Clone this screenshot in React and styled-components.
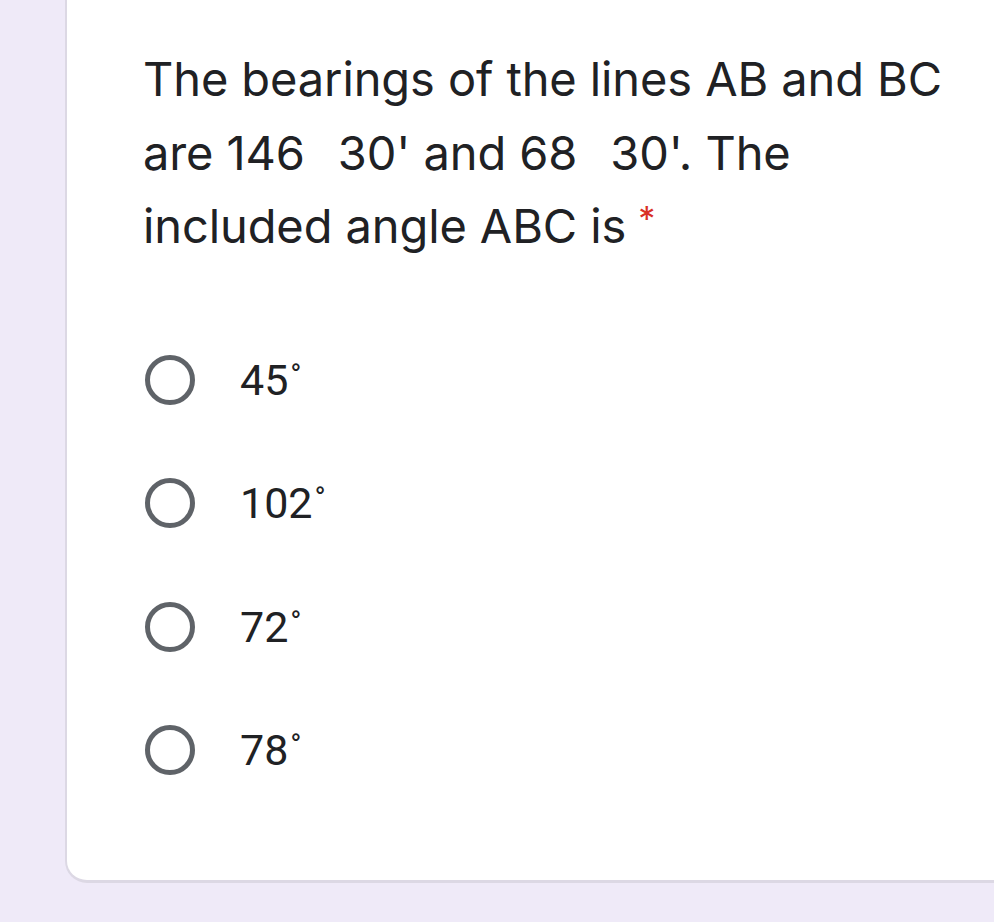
import styled, { createGlobalStyle } from "styled-components";

const GlobalStyle = createGlobalStyle`
  html, body {
    margin: 0;
    padding: 0;
    background: #efeaf8;
  }
  body {
    overflow: hidden;
  }
`;

const Page = styled.div`
  width: 994px;
  height: 922px;
  padding-left: 65px;
  box-sizing: border-box;
  overflow: hidden;
`;

const Card = styled.div`
  height: 883px;
  width: calc(100% + 20px);
  box-sizing: border-box;
  background: #ffffff;
  border-left: 2px solid #dcd8e4;
  border-bottom: 3px solid #dcd8e4;
  border-radius: 0 0 0 22px;
  padding: 42px 0 0 76px;
`;

const Question = styled.div`
  font-family: "Inter", "Liberation Sans", sans-serif;
  font-size: 47px;
  line-height: 73.5px;
  color: #202124;
  letter-spacing: -0.1px;
`;

const Gap = styled.span`
  display: inline-block;
  width: ${(p) => p.w}px;
`;

const Required = styled.span`
  color: #d93025;
  font-size: 34px;
  line-height: 0;
  margin-left: 12px;
  vertical-align: 12px;
`;

const Options = styled.div`
  margin-top: 92px;
  display: flex;
  flex-direction: column;
  gap: 73.5px;
`;

const Option = styled.label`
  display: flex;
  align-items: center;
  height: 50px;
`;

const Radio = styled.span`
  width: 40px;
  height: 40px;
  border: 5px solid #5f6368;
  border-radius: 50%;
  flex-shrink: 0;
  margin-left: 2px;
`;

const OptionText = styled.span`
  font-family: "Roboto", "Liberation Sans", sans-serif;
  font-size: 43px;
  color: #202124;
  margin-left: 45px;
`;

const Deg = styled.span`
  font-size: 30px;
  vertical-align: 10px;
  margin-left: 2px;
`;

const options = ["45", "102", "72", "78"];

export default function App() {
  return (
    <>
      <GlobalStyle />
      <Page>
        <Card>
          <Question>
            The bearings of the lines AB and BC
            <br />
            are 146<Gap w={33} />30' and 68<Gap w={33} />30'. The
            <br />
            included angle ABC is
            <Required>*</Required>
          </Question>
          <Options>
            {options.map((o) => (
              <Option key={o}>
                <Radio />
                <OptionText>
                  {o}
                  <Deg>°</Deg>
                </OptionText>
              </Option>
            ))}
          </Options>
        </Card>
      </Page>
    </>
  );
}
